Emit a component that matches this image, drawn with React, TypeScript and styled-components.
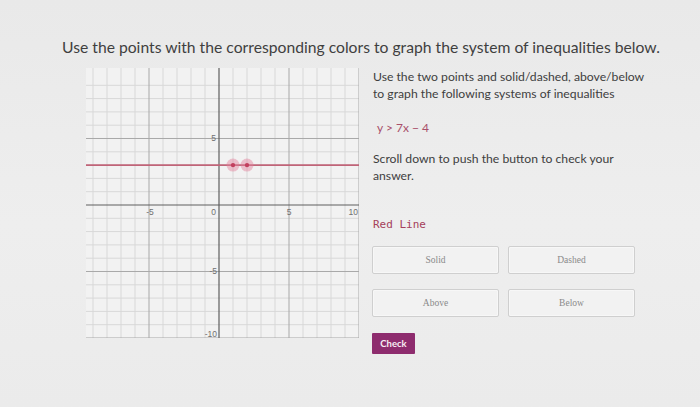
import React from "react";
import styled, { createGlobalStyle } from "styled-components";

const Global = createGlobalStyle`
  html, body { margin: 0; padding: 0; background: #ebebeb; }
  body { width: 700px; height: 407px; overflow: hidden; font-family: Lato, "Open Sans", sans-serif; }
`;

const Page = styled.div`
  width: 700px;
  height: 407px;
  box-sizing: border-box;
  padding: 37px 0 0 62px;
  display: flex;
  flex-direction: column;
  background: linear-gradient(180deg, #e9e9e9 0%, #eeeeee 55%, #ebebeb 100%);
`;

const Title = styled.h1`
  margin: 0;
  font-family: Lato, sans-serif;
  font-weight: 400;
  font-size: 15.7px;
  line-height: 20px;
  color: #3f3f3f;
  white-space: nowrap;
`;

const Body = styled.div`
  display: flex;
  gap: 13px;
  margin: 11px 0 0 24px;
`;

const GraphBox = styled.div`
  width: 273px;
  height: 270px;
  flex: none;
`;

const Panel = styled.div`
  display: flex;
  flex-direction: column;
  width: 280px;
  padding-left: 1px;
`;

const Para = styled.p<{ $mt?: number }>`
  margin: ${(p) => p.$mt ?? 0}px 0 0 0;
  font-family: Lato, sans-serif;
  font-size: 12.2px;
  line-height: 17px;
  color: #3e3e3e;
`;

const Equation = styled.div`
  margin: 17px 0 0 4px;
  font-family: Lato, sans-serif;
  font-size: 12px;
  line-height: 17px;
  color: #a9506a;
`;

const LineLabel = styled.div`
  margin: 33px 0 0 0;
  font-family: "DejaVu Sans Mono", "Liberation Mono", monospace;
  font-size: 11px;
  line-height: 15px;
  color: #a5405b;
`;

const Options = styled.div`
  display: grid;
  grid-template-columns: 127px 127px;
  column-gap: 9px;
  row-gap: 15px;
  margin: 14px 0 0 -1px;
`;

const Option = styled.button`
  height: 28px;
  box-sizing: border-box;
  border: 1px solid #cfcfcf;
  border-radius: 2px;
  background: #f2f2f2;
  font-family: "Liberation Serif", serif;
  font-size: 9.5px;
  color: #8a8a8a;
  padding: 0;
  box-shadow: inset 0 0 0 1px #f7f7f7;
`;

const CheckButton = styled.button`
  margin: 16px 0 0 -1px;
  width: 43px;
  height: 21px;
  border: none;
  border-radius: 1px;
  background: #8e2c6e;
  color: #f7eef4;
  font-family: Lato, sans-serif;
  font-weight: 700;
  font-size: 9.5px;
  padding: 0;
  align-self: flex-start;
`;

const XMIN = -9.5;
const YMAX = 10.3;
const SX = 14;
const SY = 13.3;
const W = 273;
const H = 270;
const px = (x: number) => (x - XMIN) * SX;
const py = (y: number) => (YMAX - y) * SY;

function Graph() {
  const xs: number[] = [];
  for (let i = -9; i <= 10; i++) xs.push(i);
  const ys: number[] = [];
  for (let j = -10; j <= 10; j++) ys.push(j);
  return (
    <svg width={W} height={H} viewBox={`0 0 ${W} ${H}`}>
      <rect x={0} y={0} width={W} height={H} fill="#f2f2f2" />
      {xs
        .filter((v) => v % 5 !== 0)
        .map((v) => (
          <line key={"mx" + v} x1={px(v)} x2={px(v)} y1={0} y2={H} stroke="#d8d8d8" strokeWidth={1} />
        ))}
      {ys
        .filter((v) => v % 5 !== 0)
        .map((v) => (
          <line key={"my" + v} y1={py(v)} y2={py(v)} x1={0} x2={W} stroke="#d8d8d8" strokeWidth={1} />
        ))}
      {[-5, 5, 10].map((v) => (
        <line key={"Mx" + v} x1={px(v)} x2={px(v)} y1={0} y2={H} stroke="#a8a8a8" strokeWidth={1} />
      ))}
      {[-10, -5, 5].map((v) => (
        <line key={"My" + v} y1={py(v)} y2={py(v)} x1={0} x2={W} stroke="#a8a8a8" strokeWidth={1} />
      ))}
      <line x1={px(0)} x2={px(0)} y1={0} y2={H} stroke="#5e5e5e" strokeWidth={1.2} />
      <line y1={py(0)} y2={py(0)} x1={0} x2={W} stroke="#5e5e5e" strokeWidth={1.2} />
      <g fontFamily="Liberation Sans, Arial, sans-serif" fontSize={8.5} fill="#707070">
        <text x={px(-5) + 1} y={py(0) + 10} textAnchor="middle">-5</text>
        <text x={px(0) - 3} y={py(0) + 10} textAnchor="end">0</text>
        <text x={px(5)} y={py(0) + 10} textAnchor="middle">5</text>
        <text x={px(10) - 1} y={py(0) + 10} textAnchor="end">10</text>
        <text x={px(0) - 3} y={py(5) + 3} textAnchor="end">5</text>
        <text x={px(0) - 2} y={py(-5) + 3} textAnchor="end">-5</text>
        <text x={px(0) - 2} y={py(-10) - 1} textAnchor="end">-10</text>
      </g>
      <line x1={0} x2={W} y1={py(3)} y2={py(3)} stroke="#c06478" strokeWidth={1.6} />
      {[1, 2].map((v) => (
        <g key={"p" + v}>
          <circle cx={px(v)} cy={py(3)} r={6.5} fill="#e27f98" fillOpacity={0.45} />
          <circle cx={px(v)} cy={py(3)} r={2.2} fill="#c2405e" />
        </g>
      ))}
    </svg>
  );
}

export default function App() {
  return (
    <>
      <Global />
      <Page>
        <Title>Use the points with the corresponding colors to graph the system of inequalities below.</Title>
        <Body>
          <GraphBox>
            <Graph />
          </GraphBox>
          <Panel>
            <Para>
              Use the two points and solid/dashed, above/below
              <br />
              to graph the following systems of inequalities
            </Para>
            <Equation>y &gt; 7x − 4</Equation>
            <Para $mt={14}>
              Scroll down to push the button to check your
              <br />
              answer.
            </Para>
            <LineLabel>Red Line</LineLabel>
            <Options>
              <Option>Solid</Option>
              <Option>Dashed</Option>
              <Option>Above</Option>
              <Option>Below</Option>
            </Options>
            <CheckButton>Check</CheckButton>
          </Panel>
        </Body>
      </Page>
    </>
  );
}
